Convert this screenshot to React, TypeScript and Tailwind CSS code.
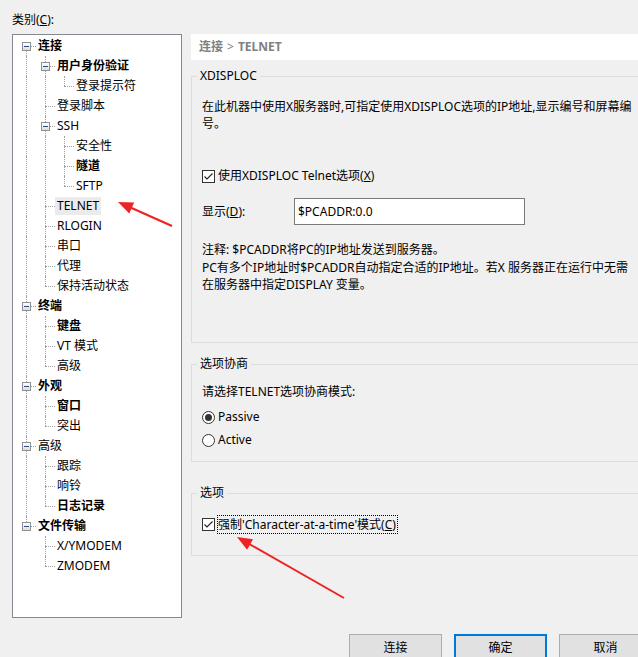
import React from "react";

type Node = { l: number; t: string; b?: boolean; kids?: boolean; sel?: boolean };

const tree: Node[] = [
  { l: 0, t: "连接", b: true, kids: true },
  { l: 1, t: "用户身份验证", b: true, kids: true },
  { l: 2, t: "登录提示符" },
  { l: 1, t: "登录脚本" },
  { l: 1, t: "SSH", kids: true },
  { l: 2, t: "安全性" },
  { l: 2, t: "隧道", b: true },
  { l: 2, t: "SFTP" },
  { l: 1, t: "TELNET", sel: true },
  { l: 1, t: "RLOGIN" },
  { l: 1, t: "串口" },
  { l: 1, t: "代理" },
  { l: 1, t: "保持活动状态" },
  { l: 0, t: "终端", b: true, kids: true },
  { l: 1, t: "键盘", b: true },
  { l: 1, t: "VT 模式" },
  { l: 1, t: "高级" },
  { l: 0, t: "外观", b: true, kids: true },
  { l: 1, t: "窗口", b: true },
  { l: 1, t: "突出" },
  { l: 0, t: "高级", kids: true },
  { l: 1, t: "跟踪" },
  { l: 1, t: "响铃" },
  { l: 1, t: "日志记录", b: true },
  { l: 0, t: "文件传输", b: true, kids: true },
  { l: 1, t: "X/YMODEM" },
  { l: 1, t: "ZMODEM" },
];

// does a later row sit at level k before the branch closes?
function hasLater(i: number, k: number) {
  for (let j = i + 1; j < tree.length; j++) {
    if (tree[j].l < k) return false;
    if (tree[j].l === k) return true;
  }
  return false;
}

const vline = "absolute left-[9px] border-l border-dotted border-[#a0a0a0]";

function TreeRow({ node, i }: { node: Node; i: number }) {
  const guides = [];
  for (let k = 0; k < node.l; k++) {
    guides.push(
      <span key={k} className="relative w-[19px] h-full shrink-0">
        {hasLater(i, k) && <span className={`${vline} top-0 bottom-0`} />}
      </span>
    );
  }
  return (
    <div className="flex items-center h-[20px]">
      {guides}
      <span className="relative w-[19px] h-full shrink-0">
        {i > 0 && <span className={`${vline} top-0 h-[10px]`} />}
        {hasLater(i, node.l) && <span className={`${vline} top-[10px] bottom-0`} />}
        <span className="absolute left-[9px] right-0 top-[10px] border-t border-dotted border-[#a0a0a0]" />
        {node.kids && (
          <span className="absolute left-[5px] top-[6px] w-[9px] h-[9px] border border-[#919191] bg-linear-to-b from-white to-[#dcdcdc] flex items-center justify-center">
            <span className="w-[5px] h-px bg-[#2b4a8c]" />
          </span>
        )}
      </span>
      <span
        className={`px-[2px] h-[18px] leading-[18px] whitespace-nowrap ${node.b ? "font-bold" : ""} ${
          node.sel ? "bg-[#ebebeb]" : ""
        }`}
      >
        {node.t}
      </span>
    </div>
  );
}

function CheckBox() {
  return (
    <span className="w-[13px] h-[13px] shrink-0 border border-[#333333] bg-white flex items-center justify-center">
      <svg width="11" height="11" viewBox="0 0 11 11">
        <path d="M1.5 5.5 L4 8 L9.5 2.5" fill="none" stroke="#222" strokeWidth="1.1" />
      </svg>
    </span>
  );
}

function Radio({ on }: { on?: boolean }) {
  return (
    <span className="w-[13px] h-[13px] shrink-0 rounded-full border border-[#333333] bg-white flex items-center justify-center">
      {on && <span className="w-[7px] h-[7px] rounded-full bg-[#333333]" />}
    </span>
  );
}

function Group({ title, className, children }: { title: string; className: string; children: React.ReactNode }) {
  return (
    <fieldset className={`border border-[#dcdcdc] ${className}`}>
      <legend className="ml-[5px] px-[3px] leading-[16px]">{title}</legend>
      <div className="pl-[10px]">{children}</div>
    </fieldset>
  );
}

function arrowHead(tx: number, ty: number, fx: number, fy: number) {
  const len = Math.hypot(fx - tx, fy - ty);
  const dx = (fx - tx) / len;
  const dy = (fy - ty) / len;
  const bx = tx + dx * 15;
  const by = ty + dy * 15;
  const nx = -dy * 6;
  const ny = dx * 6;
  return `${tx},${ty} ${bx + nx},${by + ny} ${bx - nx},${by - ny}`;
}

export default function App() {
  return (
    <div className="relative w-[638px] h-[657px] overflow-hidden bg-[#f0f0f0] text-[12px] text-black font-['Noto_Sans','Noto_Sans_CJK_SC',sans-serif]">
      <div className="flex items-start pt-[12px] pl-[12px]">
        {/* category tree */}
        <div className="flex flex-col w-[170px] shrink-0">
          <div className="h-[16px] leading-[16px]">
            类别(<span className="underline">C</span>):
          </div>
          <div className="mt-[6px] h-[584px] border border-[#828790] bg-white pt-[1px] pl-[4px]">
            {tree.map((n, i) => (
              <TreeRow key={i} node={n} i={i} />
            ))}
          </div>
        </div>

        {/* settings panel */}
        <div className="ml-[9px] mt-[22px] w-[460px] shrink-0 flex flex-col">
          <div className="h-[26px] bg-white pl-[8px] flex items-center text-[#808080] whitespace-nowrap">
            <span className="font-bold">连接</span>
            <span className="mx-[4px]">&gt;</span>
            <span className="font-bold">TELNET</span>
          </div>

          <Group title="XDISPLOC" className="mt-[8px] h-[275px]">
            <div className="mt-[14px] leading-[17px] whitespace-nowrap">
              <div>在此机器中使用X服务器时,可指定使用XDISPLOC选项的IP地址,显示编号和屏幕编</div>
              <div>号。</div>
            </div>
            <div className="mt-[36px] h-[16px] flex items-center">
              <CheckBox />
              <span className="ml-[3px] whitespace-nowrap">
                使用XDISPLOC Telnet选项(<span className="underline">X</span>)
              </span>
            </div>
            <div className="mt-[14px] h-[27px] flex items-center">
              <span className="w-[92px] shrink-0">
                显示(<span className="underline">D</span>):
              </span>
              <div className="w-[231px] h-[27px] border border-[#7a7a7a] bg-white pl-[3px] flex items-center">
                $PCADDR:0.0
              </div>
            </div>
            <div className="mt-[16px] leading-[17px] whitespace-nowrap">注释: $PCADDR将PC的IP地址发送到服务器。</div>
            <div className="mt-[1px] leading-[17px] whitespace-nowrap">
              <div>PC有多个IP地址时$PCADDR自动指定合适的IP地址。若X 服务器正在运行中无需</div>
              <div>在服务器中指定DISPLAY 变量。</div>
            </div>
          </Group>

          <Group title="选项协商" className="mt-[13px] h-[106px]">
            <div className="mt-[12px] h-[16px] leading-[16px] whitespace-nowrap">请选择TELNET选项协商模式:</div>
            <div className="mt-[9px] h-[16px] flex items-center">
              <Radio on />
              <span className="ml-[3px]">Passive</span>
            </div>
            <div className="mt-[7px] h-[16px] flex items-center">
              <Radio />
              <span className="ml-[3px]">Active</span>
            </div>
          </Group>

          <Group title="选项" className="mt-[23px] h-[71px]">
            <div className="mt-[13px] h-[20px] flex items-center">
              <CheckBox />
              <span className="ml-[2px] h-[19px] leading-[17px] border border-dotted border-black pr-[1px] whitespace-nowrap">
                强制'Character-at-a-time'模式(<span className="underline">C</span>)
              </span>
            </div>
          </Group>
        </div>
      </div>

      {/* dialog buttons */}
      <div className="mt-[16px] pl-[349px] flex gap-[12px]">
        <button className="w-[93px] h-[27px] shrink-0 border border-[#adadad] bg-[#e1e1e1]">连接</button>
        <button className="w-[93px] h-[27px] shrink-0 border-2 border-[#0078d7] bg-[#e1e1e1]">确定</button>
        <button className="w-[93px] h-[27px] shrink-0 border border-[#adadad] bg-[#e1e1e1]">取消</button>
      </div>

      {/* red annotation arrows */}
      <svg className="absolute inset-0 pointer-events-none" width="638" height="657">
        <line x1="172" y1="226" x2="126" y2="205.5" stroke="#ee2222" strokeWidth="2" />
        <polygon points={arrowHead(118, 202, 172, 226)} fill="#ee2222" />
        <line x1="344" y1="598" x2="244" y2="541" stroke="#ee2222" strokeWidth="2" />
        <polygon points={arrowHead(237, 537, 344, 598)} fill="#ee2222" />
      </svg>
    </div>
  );
}
